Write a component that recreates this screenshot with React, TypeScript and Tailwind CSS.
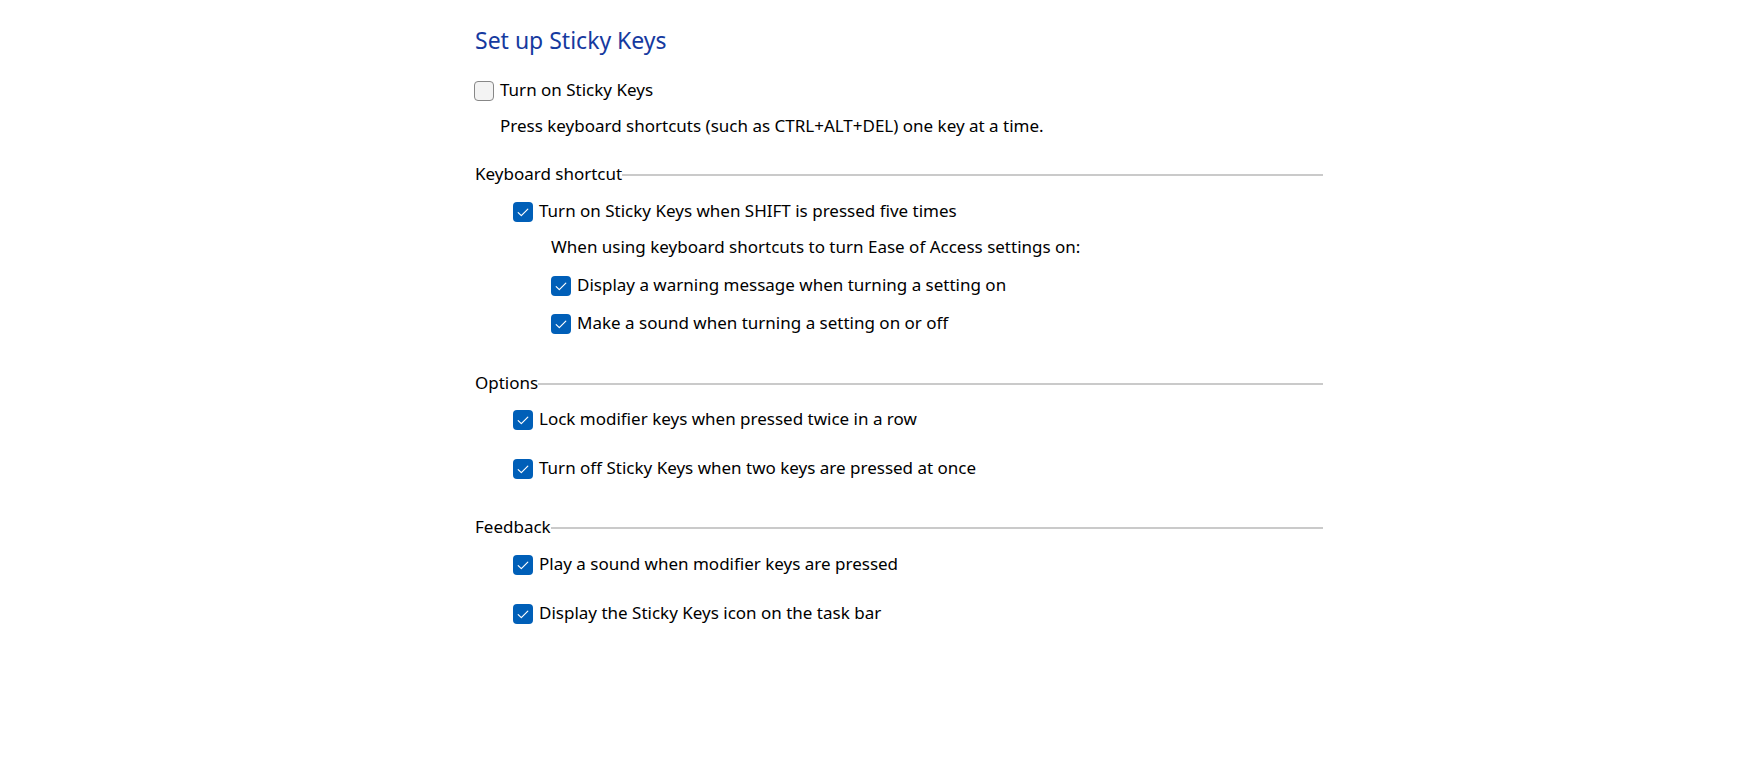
import type { ReactNode } from 'react';

const FONT = { fontFamily: '"Noto Sans", "Open Sans", sans-serif' };

function Box({ checked }: { checked: boolean }) {
  if (!checked) {
    return (
      <span className="w-[20px] h-[20px] shrink-0 rounded-[4px] border border-[#878787] bg-[#f3f3f3]" />
    );
  }
  return (
    <span className="w-[20px] h-[20px] shrink-0 rounded-[4px] bg-[#005fb8] flex items-center justify-center">
      <svg width="20" height="20" viewBox="0 0 20 20" fill="none">
        <polyline
          points="5.2,10.6 8.3,13.6 14.8,7.1"
          stroke="#ffffff"
          strokeWidth="1.2"
          strokeLinecap="round"
          strokeLinejoin="round"
        />
      </svg>
    </span>
  );
}

function Check({
  checked = true,
  indent,
  mt,
  children,
}: {
  checked?: boolean;
  indent: string;
  mt: string;
  children: ReactNode;
}) {
  return (
    <label className={`flex items-start gap-[6px] h-[20px] ${indent} ${mt}`}>
      <Box checked={checked} />
      <span className="text-[17px] leading-[17px] whitespace-nowrap">{children}</span>
    </label>
  );
}

function Group({ title, mt }: { title: string; mt: string }) {
  return (
    <div className={`flex items-start h-[20px] ${mt}`}>
      <span className="text-[17px] leading-[20px] pl-[1px] whitespace-nowrap">{title}</span>
      <div className="flex-1 h-[2px] mt-[10px] bg-[#cacaca]" />
    </div>
  );
}

export default function App() {
  return (
    <div className="min-h-[783px] w-full bg-white text-black" style={FONT}>
      <div className="ml-[474px] w-[849px] pt-[25px] flex flex-col">
        <h1 className="text-[23px] leading-[30px] pl-[1px] text-[#163a9f] font-normal">
          Set up Sticky Keys
        </h1>

        <Check checked={false} indent="" mt="mt-[26px]">
          Turn on Sticky Keys
        </Check>
        <p className="mt-[15px] pl-[26px] text-[17px] leading-[20px]">
          Press keyboard shortcuts (such as CTRL+ALT+DEL) one key at a time.
        </p>

        <Group title="Keyboard shortcut" mt="mt-[28px]" />
        <Check indent="pl-[39px]" mt="mt-[18px]">
          Turn on Sticky Keys when SHIFT is pressed five times
        </Check>
        <p className="mt-[15px] pl-[77px] text-[17px] leading-[20px]">
          When using keyboard shortcuts to turn Ease of Access settings on:
        </p>
        <Check indent="pl-[77px]" mt="mt-[19px]">
          Display a warning message when turning a setting on
        </Check>
        <Check indent="pl-[77px]" mt="mt-[18px]">
          Make a sound when turning a setting on or off
        </Check>

        <Group title="Options" mt="mt-[39px]" />
        <Check indent="pl-[39px]" mt="mt-[17px]">
          Lock modifier keys when pressed twice in a row
        </Check>
        <Check indent="pl-[39px]" mt="mt-[29px]">
          Turn off Sticky Keys when two keys are pressed at once
        </Check>

        <Group title="Feedback" mt="mt-[38px]" />
        <Check indent="pl-[39px]" mt="mt-[18px]">
          Play a sound when modifier keys are pressed
        </Check>
        <Check indent="pl-[39px]" mt="mt-[29px]">
          Display the Sticky Keys icon on the task bar
        </Check>
      </div>
    </div>
  );
}
